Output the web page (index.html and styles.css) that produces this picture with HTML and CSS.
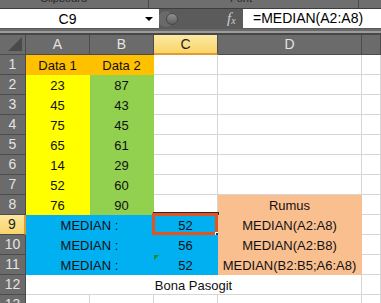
FILE: index.html
```html
<!DOCTYPE html>
<html lang="id">
<head>
    <meta charset="UTF-8">
    <title>MEDIAN</title>
    <link rel="stylesheet" href="styles.css">
</head>
<body>
    <div class="ribbon">
        <span class="grp clip">Clipboard</span>
        <span class="launch"></span>
        <span class="grp font">Font</span>
        <span class="launch2"></span>
    </div>
    <div class="fbar">
        <div class="namebox"><span class="ref">C9</span><span class="arrow"></span></div>
        <div class="split"><span class="knob"></span></div>
        <div class="fx"><i>f</i><sub>x</sub></div>
        <div class="input">=MEDIAN(A2:A8)</div>
    </div>
    <div class="divider"></div>

    <div class="sheet">
        <div class="hd corner"><svg width="14" height="14" viewBox="0 0 14 14"><polygon points="14,0 14,14 0,14" fill="#4a4a4a"/></svg></div>
        <div class="hd">A</div>
        <div class="hd">B</div>
        <div class="hd sel-col">C</div>
        <div class="hd">D</div>
        <div class="hd"></div>

        <div class="hd rh">1</div>
        <div class="c orange">Data 1</div>
        <div class="c orange">Data 2</div>
        <div class="c"></div><div class="c"></div><div class="c"></div>

        <div class="hd rh">2</div>
        <div class="c yellow">23</div><div class="c green">87</div>
        <div class="c"></div><div class="c"></div><div class="c"></div>

        <div class="hd rh">3</div>
        <div class="c yellow">45</div><div class="c green">43</div>
        <div class="c"></div><div class="c"></div><div class="c"></div>

        <div class="hd rh">4</div>
        <div class="c yellow">75</div><div class="c green">45</div>
        <div class="c"></div><div class="c"></div><div class="c"></div>

        <div class="hd rh">5</div>
        <div class="c yellow">65</div><div class="c green">61</div>
        <div class="c"></div><div class="c"></div><div class="c"></div>

        <div class="hd rh">6</div>
        <div class="c yellow">14</div><div class="c green">29</div>
        <div class="c"></div><div class="c"></div><div class="c"></div>

        <div class="hd rh">7</div>
        <div class="c yellow">52</div><div class="c green">60</div>
        <div class="c"></div><div class="c"></div><div class="c"></div>

        <div class="hd rh">8</div>
        <div class="c yellow">76</div><div class="c green">90</div>
        <div class="c"></div><div class="c peach">Rumus</div><div class="c"></div>

        <div class="hd rh sel-row">9</div>
        <div class="c blue span2">MEDIAN :</div>
        <div class="c blue active">52<span class="frame"></span><span class="handle"></span></div>
        <div class="c peach">MEDIAN(A2:A8)</div><div class="c"></div>

        <div class="hd rh">10</div>
        <div class="c blue span2">MEDIAN :</div>
        <div class="c blue">56</div>
        <div class="c peach">MEDIAN(A2:B8)</div><div class="c"></div>

        <div class="hd rh">11</div>
        <div class="c blue span2">MEDIAN :</div>
        <div class="c blue">52<span class="err"></span></div>
        <div class="c peach">MEDIAN(B2:B5;A6:A8)</div><div class="c"></div>

        <div class="hd rh">12</div>
        <div class="c span4">Bona Pasogit</div>
        <div class="c"></div>

        <div class="hd rh">13</div>
        <div class="c"></div><div class="c"></div><div class="c"></div><div class="c"></div><div class="c"></div>
    </div>
</body>
</html>
```
FILE: styles.css
```css
*{margin:0;padding:0;box-sizing:border-box;}
html,body{
    width:381px;
    height:303px;
    overflow:hidden;
    background:#595959;
    font-family:"Liberation Sans",Arial,sans-serif;
}

/* ribbon strip, cut off */
.ribbon{
    height:9px;
    background:#6e6e6e;
    border-bottom:1px solid #3e3e3e;
    position:relative;
    overflow:hidden;
}
.grp{
    position:absolute;
    top:-9px;
    font-size:11px;
    line-height:14px;
    color:#2a2a2a;
}
.clip{left:40px;}
.font{left:230px;}
.launch,.launch2{
    position:absolute;
    top:0;
    width:1px;
    height:9px;
    background:#4a4a4a;
}
.launch{left:148px;}
.launch2{left:358px;}

/* formula bar */
.fbar{
    height:20px;
    display:flex;
    background:#5b5b5b;
}
.namebox{
    width:159px;
    height:19px;
    background:#fff;
    display:flex;
    align-items:center;
    position:relative;
}
.ref{
    flex:1;
    text-align:center;
    font-size:14px;
    color:#000;
    padding-right:10px;
}
.arrow{
    width:0;
    height:0;
    border-left:4px solid transparent;
    border-right:4px solid transparent;
    border-top:4px solid #000;
    margin-right:6px;
}
.split{
    width:68px;
    display:flex;
    align-items:center;
    padding-left:1px;
}
.knob{
    width:12px;
    height:12px;
    border-radius:50%;
    background:linear-gradient(#909090,#5e5e5e);
    border:1px solid #4a4a4a;
    margin-left:6px;
    box-shadow:-6px 0 0 2px #6a6a6a;
}
.fx{
    width:16px;
    font-family:"Liberation Serif",serif;
    color:#cfcfcf;
    font-size:15px;
    line-height:19px;
}
.fx sub{font-size:10px;font-style:italic;vertical-align:-1px;}
.input{
    flex:1;
    height:19px;
    background:#fff;
    font-size:14px;
    line-height:19px;
    padding-left:10px;
    color:#000;
}
.divider{
    height:6px;
    background:linear-gradient(#6a6a6a 0 2px,#9c9c9c 2px 4px,#474747 4px 6px);
}

/* sheet */
.sheet{
    display:grid;
    grid-template-columns:26px 64px 64px 64px 144px 1fr;
    grid-auto-rows:20px;
    background:#fff;
    height:268px;
    overflow:hidden;
    font-size:13px;
}
.hd{
    background:#6b6b6b;
    color:#e4e4e4;
    border-right:1px solid #4c4c4c;
    border-bottom:1px solid #4c4c4c;
    text-align:center;
    line-height:19px;
    font-size:14px;
}
.corner{
    display:flex;
    align-items:flex-end;
    justify-content:flex-end;
    padding:0 3px 3px 0;
}
.corner svg{display:block;}
.sel-col{
    background:linear-gradient(#fde9a3,#f8d56a);
    color:#222;
    border-bottom:2px solid #e39b30;
}
.sel-row{
    background:linear-gradient(#fde7a0,#f8d56a);
    color:#222;
    border-right:2px solid #e39b30;
}
.c{
    border-right:1px solid #d6d6d6;
    border-bottom:1px solid #d6d6d6;
    text-align:center;
    line-height:19px;
    padding-top:1px;
    color:#111;
    white-space:nowrap;
    position:relative;
}
.orange{background:#ffc000;border-color:transparent;}
.yellow{background:#ffff00;border-color:transparent;}
.green{background:#92d050;border-color:transparent;}
.blue{background:#00b0f0;border-color:transparent;}
.peach{background:#fabf8f;border-color:transparent;}
.span2{grid-column:span 2;}
.span4{grid-column:span 4;}

.frame{
    position:absolute;
    left:-2px;
    top:-2px;
    right:-1px;
    bottom:-1px;
    border:3px solid #e8521c;
    box-shadow:1px -1px 0 #1d2a3a;
}
.handle{
    position:absolute;
    right:-3px;
    bottom:-3px;
    width:5px;
    height:5px;
    background:#1f3a5c;
    border:1px solid #fff;
}
.err{
    position:absolute;
    left:0;
    top:0;
    border-top:5px solid #1a8a2a;
    border-right:5px solid transparent;
}
```
